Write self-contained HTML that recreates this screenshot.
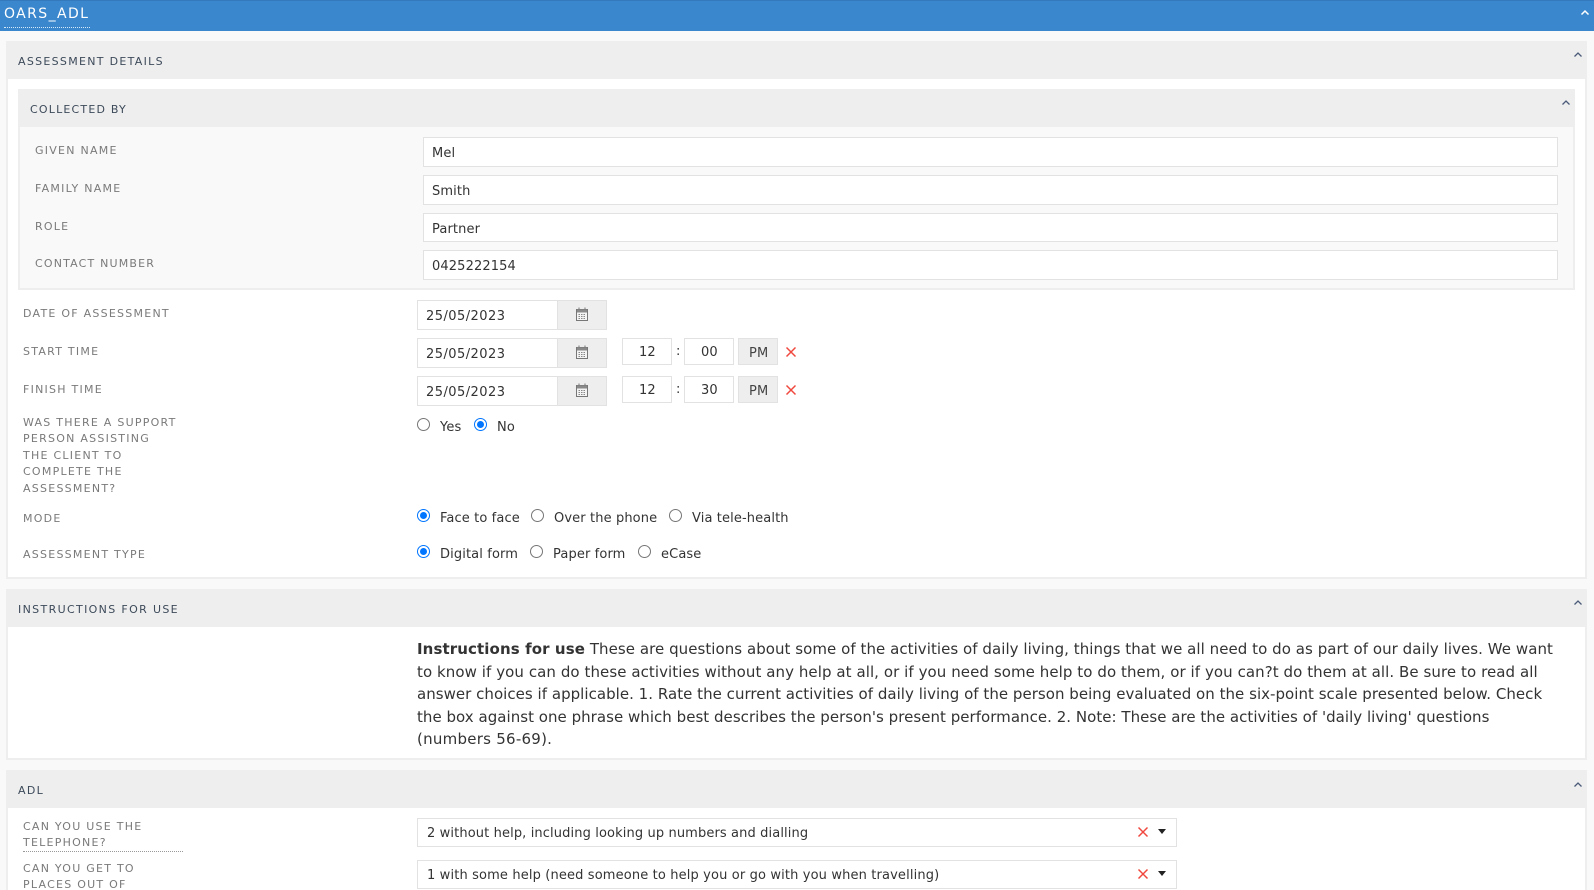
<!DOCTYPE html>
<html><head><meta charset="utf-8"><style>
*{box-sizing:border-box}
html,body{margin:0;padding:0;width:1594px;height:890px;overflow:hidden;background:#f9f9f9}
body{position:relative;font-family:"DejaVu Sans","Liberation Sans",sans-serif;color:#333}
.a{position:absolute}
.t{position:absolute;white-space:nowrap;line-height:16px}
.h{font-size:11px;letter-spacing:1.3px;color:#3d4a5a}
.l{font-size:11px;letter-spacing:1.25px;color:#7a7a7a}
.v{font-size:13px;letter-spacing:.12px;color:#333}
.d{letter-spacing:.45px}
.box{position:absolute;background:#fff;border:1px solid #e2e2e2}
.add{position:absolute;background:#eee;border:1px solid #e2e2e2}
.sec{position:absolute;left:6px;width:1581px;background:#fff;border:2px solid #eee}
.hd{position:absolute;background:#eee}
.ins{font-size:15px;letter-spacing:.05px;color:#333;line-height:22px}
svg{position:absolute;overflow:visible}
.r{position:absolute;width:13px;height:13px;border:1px solid #767676;border-radius:50%;background:#fff}
.r.on{border:1.5px solid #0075ff}
.r.on:after{content:"";position:absolute;left:1.5px;top:1.5px;width:7px;height:7px;border-radius:50%;background:#0075ff}
</style></head><body>
<div class="a" style="left:0;top:0;width:1594px;height:31px;background:#3a87cd;border-top:1px solid #3379bb"></div>
<div class="t" style="left:4px;top:6px;font-size:14px;letter-spacing:1.4px;color:#fff">OARS_ADL</div>
<div class="a" style="left:4px;top:27px;width:86px;border-top:1px dotted #d8e8f6"></div>
<svg style="left:1581px;top:10px" width="8" height="5"><path d="M.5 4.5L4 1l3.5 3.5" fill="none" stroke="#fff" stroke-width="1.5"/></svg>

<div class="sec" style="top:41px;height:538px"></div>
<div class="hd" style="left:6px;top:41px;width:1581px;height:38px"></div>
<div class="t h" style="left:18px;top:54px">ASSESSMENT DETAILS</div>
<svg style="left:1574px;top:52px" width="8" height="5"><path d="M.5 4.5L4 1l3.5 3.5" fill="none" stroke="#4a5a78" stroke-width="1.3"/></svg>

<div class="a" style="left:18px;top:89px;width:1557px;height:201px;background:#f9f9f9;border:2px solid #eee"></div>
<div class="hd" style="left:18px;top:89px;width:1557px;height:38px"></div>
<div class="t h" style="left:30px;top:102px;letter-spacing:1.2px">COLLECTED BY</div>
<svg style="left:1562px;top:100px" width="8" height="5"><path d="M.5 4.5L4 1l3.5 3.5" fill="none" stroke="#4a5a78" stroke-width="1.3"/></svg>

<div class="t l" style="left:35px;top:143px">GIVEN NAME</div>
<div class="t l" style="left:35px;top:181px">FAMILY NAME</div>
<div class="t l" style="left:35px;top:219px">ROLE</div>
<div class="t l" style="left:35px;top:256px;letter-spacing:1.18px">CONTACT NUMBER</div>
<div class="box" style="left:423px;top:137px;width:1135px;height:30px"></div>
<div class="box" style="left:423px;top:175px;width:1135px;height:30px"></div>
<div class="box" style="left:423px;top:213px;width:1135px;height:29px"></div>
<div class="box" style="left:423px;top:250px;width:1135px;height:30px"></div>
<div class="t v" style="left:432px;top:146px">Mel</div>
<div class="t v" style="left:432px;top:184px">Smith</div>
<div class="t v" style="left:432px;top:222px">Partner</div>
<div class="t v" style="left:432px;top:259px">0425222154</div>

<div class="t l" style="left:23px;top:306px">DATE OF ASSESSMENT</div>
<div class="t l" style="left:23px;top:344px">START TIME</div>
<div class="t l" style="left:23px;top:382px">FINISH TIME</div>
<div class="t l" style="left:23px;top:415px">WAS THERE A SUPPORT</div>
<div class="t l" style="left:23px;top:431px">PERSON ASSISTING</div>
<div class="t l" style="left:23px;top:448px">THE CLIENT TO</div>
<div class="t l" style="left:23px;top:464px">COMPLETE THE</div>
<div class="t l" style="left:23px;top:481px">ASSESSMENT?</div>
<div class="t l" style="left:23px;top:511px">MODE</div>
<div class="t l" style="left:23px;top:547px">ASSESSMENT TYPE</div>

<div class="box" style="left:417px;top:300px;width:141px;height:30px"></div>
<div class="add" style="left:557px;top:300px;width:50px;height:30px"></div>
<div class="t v d" style="left:426px;top:309px">25/05/2023</div>
<svg style="left:576px;top:307px" width="12" height="14" viewBox="0 0 12 14"><path d="M.5 2.5h11v11H.5z" fill="#f4f4f4" stroke="#777"/><path d="M1 2.500h10v3H1z" fill="#8a8a8a"/><path d="M3 .5v2M9 .5v2" stroke="#777"/><path d="M2.500 7.500h7M2.500 9.500h7M2.500 11.500h7" stroke="#888" stroke-dasharray="1.500 1"/></svg>

<div class="box" style="left:417px;top:338px;width:141px;height:30px"></div>
<div class="add" style="left:557px;top:338px;width:50px;height:30px"></div>
<div class="t v d" style="left:426px;top:347px">25/05/2023</div>
<svg style="left:576px;top:345px" width="12" height="14" viewBox="0 0 12 14"><path d="M.5 2.5h11v11H.5z" fill="#f4f4f4" stroke="#777"/><path d="M1 2.500h10v3H1z" fill="#8a8a8a"/><path d="M3 .5v2M9 .5v2" stroke="#777"/><path d="M2.500 7.500h7M2.500 9.500h7M2.500 11.500h7" stroke="#888" stroke-dasharray="1.500 1"/></svg>

<div class="box" style="left:417px;top:376px;width:141px;height:30px"></div>
<div class="add" style="left:557px;top:376px;width:50px;height:30px"></div>
<div class="t v d" style="left:426px;top:385px">25/05/2023</div>
<svg style="left:576px;top:383px" width="12" height="14" viewBox="0 0 12 14"><path d="M.5 2.5h11v11H.5z" fill="#f4f4f4" stroke="#777"/><path d="M1 2.500h10v3H1z" fill="#8a8a8a"/><path d="M3 .5v2M9 .5v2" stroke="#777"/><path d="M2.500 7.500h7M2.500 9.500h7M2.500 11.500h7" stroke="#888" stroke-dasharray="1.500 1"/></svg>

<div class="box" style="left:622px;top:338px;width:50px;height:27px"></div>
<div class="box" style="left:684px;top:338px;width:50px;height:27px"></div>
<div class="add" style="left:738px;top:338px;width:40px;height:27px"></div>
<div class="t v" style="left:639px;top:345px">12</div>
<div class="t v" style="left:701px;top:345px">00</div>
<div class="t v" style="left:676px;top:344px">:</div>
<div class="t v" style="left:749px;top:346px;color:#444">PM</div>
<svg style="left:786px;top:347px" width="10" height="10"><path d="M.5.5l9 9M9.500.5l-9 9" stroke="#f0483e" stroke-width="1.500"/></svg>

<div class="box" style="left:622px;top:376px;width:50px;height:27px"></div>
<div class="box" style="left:684px;top:376px;width:50px;height:27px"></div>
<div class="add" style="left:738px;top:376px;width:40px;height:27px"></div>
<div class="t v" style="left:639px;top:383px">12</div>
<div class="t v" style="left:701px;top:383px">30</div>
<div class="t v" style="left:676px;top:382px">:</div>
<div class="t v" style="left:749px;top:384px;color:#444">PM</div>
<svg style="left:786px;top:385px" width="10" height="10"><path d="M.5.5l9 9M9.500.5l-9 9" stroke="#f0483e" stroke-width="1.500"/></svg>

<div class="r" style="left:417px;top:418px"></div>
<div class="t v" style="left:440px;top:420px">Yes</div>
<div class="r on" style="left:474px;top:418px"></div>
<div class="t v" style="left:497px;top:420px">No</div>

<div class="r on" style="left:417px;top:509px"></div>
<div class="t v" style="left:440px;top:511px">Face to face</div>
<div class="r" style="left:531px;top:509px"></div>
<div class="t v" style="left:554px;top:511px">Over the phone</div>
<div class="r" style="left:669px;top:509px"></div>
<div class="t v" style="left:692px;top:511px">Via tele-health</div>

<div class="r on" style="left:417px;top:545px"></div>
<div class="t v" style="left:440px;top:547px">Digital form</div>
<div class="r" style="left:530px;top:545px"></div>
<div class="t v" style="left:553px;top:547px">Paper form</div>
<div class="r" style="left:638px;top:545px"></div>
<div class="t v" style="left:661px;top:547px">eCase</div>

<div class="sec" style="top:589px;height:171px"></div>
<div class="hd" style="left:6px;top:589px;width:1581px;height:38px"></div>
<div class="t h" style="left:18px;top:602px;letter-spacing:1.35px">INSTRUCTIONS FOR USE</div>
<svg style="left:1574px;top:600px" width="8" height="5"><path d="M.5 4.500L4 1l3.500 3.500" fill="none" stroke="#4a5a78" stroke-width="1.300"/></svg>
<div class="t ins" style="left:417px;top:638px"><b style="letter-spacing:.1px">Instructions for use</b> These are questions about some of the activities of daily living, things that we all need to do as part of our daily lives. We want</div>
<div class="t ins" style="left:417px;top:661px;letter-spacing:.07px">to know if you can do these activities without any help at all, or if you need some help to do them, or if you can?t do them at all. Be sure to read all</div>
<div class="t ins" style="left:417px;top:683px;letter-spacing:.03px">answer choices if applicable. 1. Rate the current activities of daily living of the person being evaluated on the six-point scale presented below. Check</div>
<div class="t ins" style="left:417px;top:706px;letter-spacing:.03px">the box against one phrase which best describes the person's present performance. 2. Note: These are the activities of 'daily living' questions</div>
<div class="t ins" style="left:417px;top:728px;letter-spacing:.25px">(numbers 56-69).</div>

<div class="sec" style="top:770px;height:130px"></div>
<div class="hd" style="left:6px;top:770px;width:1581px;height:38px"></div>
<div class="t h" style="left:18px;top:783px">ADL</div>
<svg style="left:1574px;top:782px" width="8" height="5"><path d="M.5 4.500L4 1l3.500 3.500" fill="none" stroke="#4a5a78" stroke-width="1.300"/></svg>

<div class="t l" style="left:23px;top:819px">CAN YOU USE THE</div>
<div class="t l" style="left:23px;top:835px">TELEPHONE?</div>
<div class="a" style="left:23px;top:851px;width:160px;border-top:1px dotted #999"></div>
<div class="t l" style="left:23px;top:861px">CAN YOU GET TO</div>
<div class="t l" style="left:23px;top:877px">PLACES OUT OF</div>

<div class="box" style="left:417px;top:818px;width:760px;height:29px"></div>
<div class="t v" style="left:427px;top:826px">2 without help, including looking up numbers and dialling</div>
<svg style="left:1138px;top:827px" width="10" height="10"><path d="M.5.5l9 9M9.500.5l-9 9" stroke="#f0483e" stroke-width="1.500"/></svg>
<svg style="left:1158px;top:829px" width="8" height="5"><path d="M0 0h8L4 5z" fill="#222"/></svg>

<div class="box" style="left:417px;top:860px;width:760px;height:29px"></div>
<div class="t v" style="left:427px;top:868px;letter-spacing:.14px">1 with some help (need someone to help you or go with you when travelling)</div>
<svg style="left:1138px;top:869px" width="10" height="10"><path d="M.5.5l9 9M9.500.5l-9 9" stroke="#f0483e" stroke-width="1.500"/></svg>
<svg style="left:1158px;top:871px" width="8" height="5"><path d="M0 0h8L4 5z" fill="#222"/></svg>
</body></html>
